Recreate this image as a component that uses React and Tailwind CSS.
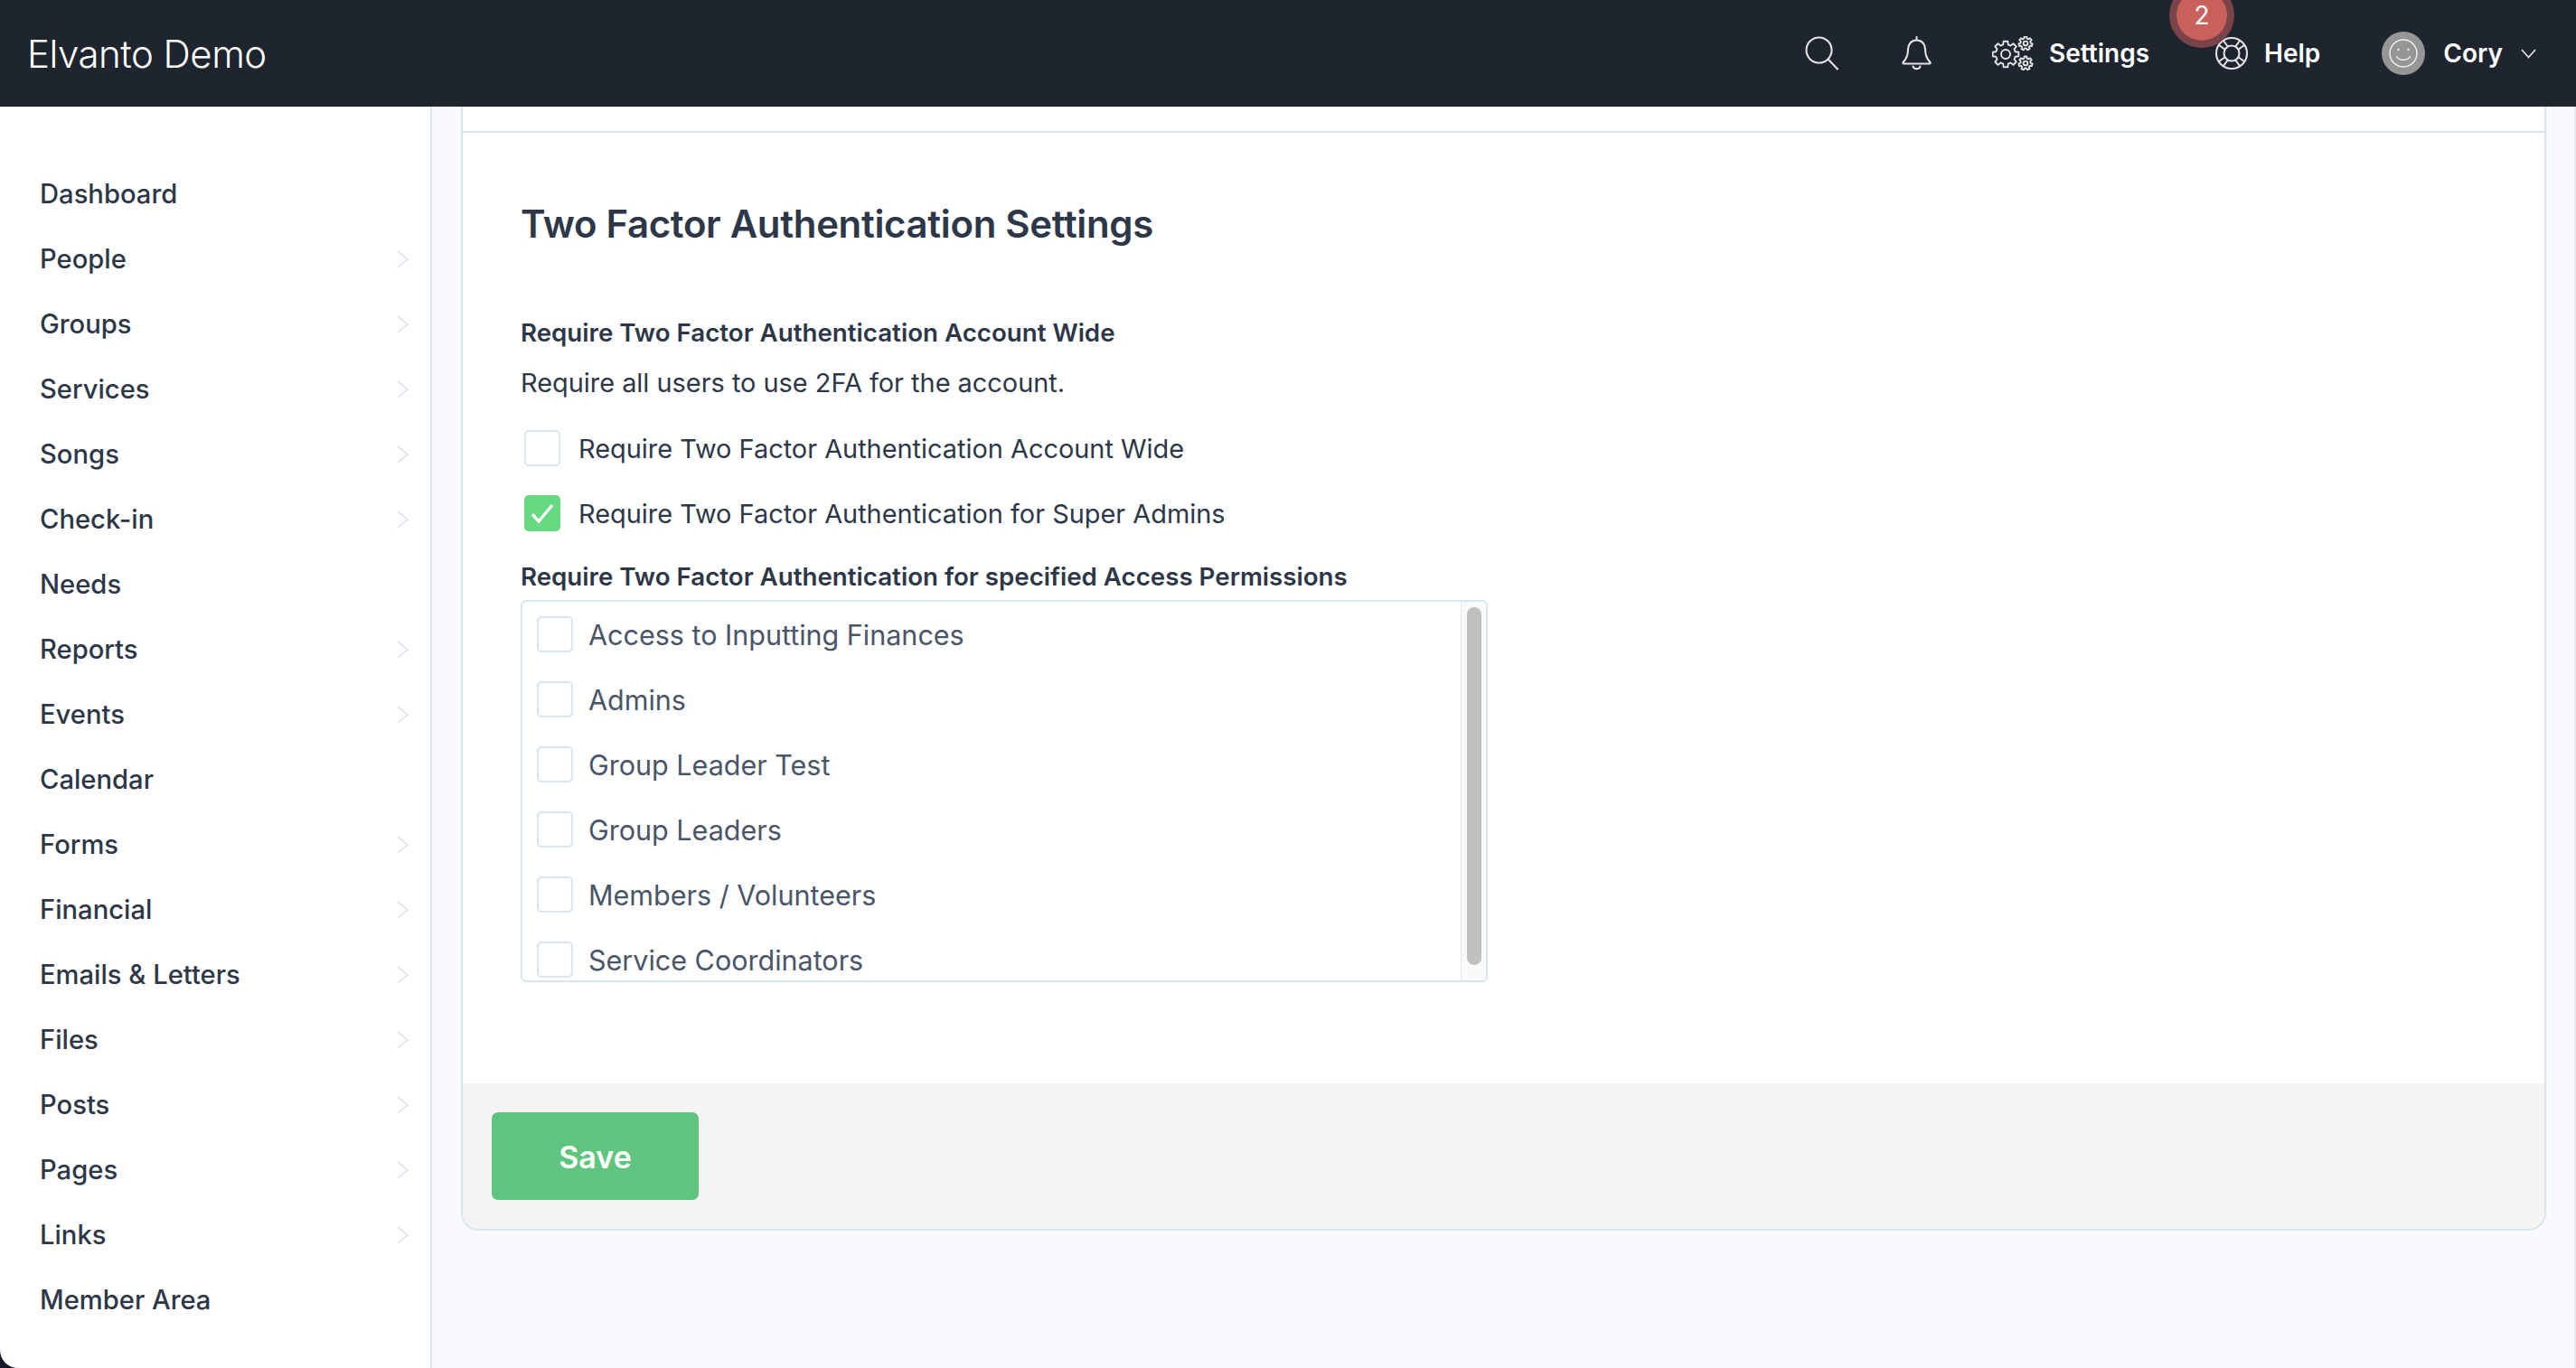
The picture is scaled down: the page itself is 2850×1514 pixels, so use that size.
import React from "react";

const items = [
  ["Dashboard", false], ["People", true], ["Groups", true], ["Services", true], ["Songs", true], ["Check-in", true],
  ["Needs", false], ["Reports", true], ["Events", true], ["Calendar", false], ["Forms", true], ["Financial", true],
  ["Emails & Letters", true], ["Files", true], ["Posts", true], ["Pages", true], ["Links", true], ["Member Area", false],
];
const perms = ["Access to Inputting Finances", "Admins", "Group Leader Test", "Group Leaders", "Members / Volunteers", "Service Coordinators"];

function gearPath(cx, cy, ro, ri, n) {
  const pts = [];
  const step = (Math.PI * 2) / n;
  for (let i = 0; i < n; i++) {
    const a = i * step - Math.PI / 2;
    const w = step * 0.2;
    const w2 = step * 0.3;
    const p = (r, t) => `${(cx + r * Math.cos(t)).toFixed(2)} ${(cy + r * Math.sin(t)).toFixed(2)}`;
    pts.push(p(ri, a - w2 - 0.02), p(ro, a - w), p(ro, a + w), p(ri, a + w2 + 0.02));
  }
  return "M" + pts.join("L") + "Z";
}

function Gears() {
  return (
    <svg width="46" height="38" viewBox="0 0 46 38" fill="none" stroke="#e2e2e2" strokeWidth="1.9" strokeLinejoin="round">
      <path d={gearPath(15, 20, 14.5, 11, 8)} />
      <circle cx="15" cy="20" r="5" />
      <path d={gearPath(37, 8, 7.6, 5.6, 7)} />
      <circle cx="37" cy="8" r="2.4" />
      <path d={gearPath(37, 30, 7.6, 5.6, 7)} />
      <circle cx="37" cy="30" r="2.4" />
    </svg>
  );
}

function Check({ checked }) {
  if (checked) {
    return (
      <span className="flex h-[40px] w-[40px] shrink-0 items-center justify-center rounded-[5px] bg-[#68d983]">
        <svg width="30" height="26" viewBox="0 0 30 26" fill="none" stroke="#ffffff" strokeWidth="3.2">
          <polyline points="4,14 11,22 26,4" />
        </svg>
      </span>
    );
  }
  return <span className="block h-[40px] w-[40px] shrink-0 rounded-[5px] border-2 border-[#dae4ee] bg-white" />;
}

export default function App() {
  return (
    <div className="relative flex h-[1514px] w-[2850px] flex-col overflow-hidden bg-[#f9fafe] font-['Inter',sans-serif] text-[#2d3748]">
      <header className="flex h-[118px] shrink-0 items-center bg-[#1e252f] text-white">
        <div className="ml-[30px] text-[42px] font-light tracking-[-0.5px]">Elvanto Demo</div>
        <div className="ml-auto flex items-center">
          <svg width="38" height="38" viewBox="0 0 38 38" fill="none" stroke="#e2e2e2" strokeWidth="2.1" strokeLinecap="round">
            <circle cx="15.5" cy="15.5" r="14" />
            <line x1="25.5" y1="25.5" x2="36" y2="36.5" />
          </svg>
          <svg className="ml-[69px]" width="33" height="38" viewBox="0 0 33 38" fill="none" stroke="#e2e2e2" strokeWidth="2.1" strokeLinecap="round" strokeLinejoin="round">
            <path d="M16.5 1v3.5M16.5 4.5c-6 0-9.5 4.5-9.5 10 0 7-2.5 11.5-5.5 14.5a1 1 0 0 0 .6 1.5h28.800a1 1 0 0 0 .6-1.500c-3-3-5.500-7.500-5.500-14.500 0-5.500-3.500-10-9.500-10Z" />
            <path d="M12.500 33.500c1 3.500 7 3.500 8 0" />
          </svg>
          <span className="ml-[67px]"><Gears /></span>
          <span className="ml-[17px] text-[28px] font-semibold leading-none">Settings</span>
          <svg className="ml-[72px]" width="38" height="38" viewBox="0 0 38 38" fill="none" stroke="#e2e2e2" strokeWidth="2.1">
            <circle cx="19" cy="19" r="17" />
            <circle cx="19" cy="19" r="8.500" />
            <path d="M5 10l7 5M10 5l5 7M33 10l-7 5M28 5l-5 7M5 28l7-5M10 33l5-7M33 28l-7-5M28 33l-5-7" />
          </svg>
          <span className="ml-[17px] text-[28px] font-semibold leading-none">Help</span>
          <span className="ml-[68px] flex h-[48px] w-[48px] items-center justify-center rounded-full bg-[#969696]">
            <svg width="34" height="34" viewBox="0 0 34 34" fill="none" stroke="#f2f2f2" strokeWidth="1.4" strokeLinecap="round">
              <circle cx="17" cy="17" r="15" />
              <path d="M9.500 20.500c2.500 5 12.500 5 15 0" />
              <circle cx="11.500" cy="13" r="1.200" fill="#f2f2f2" stroke="none" />
              <circle cx="22.500" cy="13" r="1.200" fill="#f2f2f2" stroke="none" />
            </svg>
          </span>
          <span className="ml-[20px] text-[28px] font-semibold leading-none">Cory</span>
          <svg className="ml-[20px] mr-[44px]" width="17" height="11" viewBox="0 0 17 11" fill="none" stroke="#e2e2e2" strokeWidth="1.700">
            <polyline points="1,1 8.500,9.500 16,1" />
          </svg>
        </div>
      </header>

      <div className="absolute left-[2400px] top-[-19px] flex h-[72px] w-[72px] items-center justify-center rounded-full bg-[#7a4347]">
        <span className="flex h-[56px] w-[56px] items-center justify-center rounded-full bg-[#c8605c] text-[28px] text-white">2</span>
      </div>

      <div className="flex min-h-0 flex-1">
        <aside className="w-[478px] shrink-0 border-r-2 border-[#dde6f0] bg-white pt-[61px]">
          {items.map(([label, arrow]) => (
            <div key={label} className="flex h-[72px] items-center justify-between pl-[44px] pr-[24px] text-[29.200px] font-medium text-[#2d3748]">
              <span>{label}</span>
              {arrow && (
                <svg width="13" height="20" viewBox="0 0 13 20" fill="none" stroke="#d5e1ec" strokeWidth="1.600">
                  <polyline points="1,1 12,10 1,19" />
                </svg>
              )}
            </div>
          ))}
        </aside>

        <main className="min-w-0 flex-1 pl-[32px] pr-[33px]">
          <div className="overflow-hidden rounded-b-[20px] border-x-2 border-b-2 border-[#dae4ee] bg-white">
            <div className="h-[29px] border-b-2 border-[#dae4ee]" />
            <div className="h-[1052px] pl-[64px]">
              <h2 className="flex h-[199px] items-center pt-[3px] text-[41.900px] font-semibold tracking-[-0.3px]">Two Factor Authentication Settings</h2>
              <div className="mt-[2px] flex h-[40px] items-center pt-px text-[27.700px] font-semibold">Require Two Factor Authentication Account Wide</div>
              <div className="mt-[16px] flex h-[40px] items-center text-[28.900px]">Require all users to use 2FA for the account.</div>
              <div className="mt-[16px] flex h-[72px] items-center pl-[4px] text-[28.900px]">
                <Check />
                <span className="ml-[20px] pt-px">Require Two Factor Authentication Account Wide</span>
              </div>
              <div className="flex h-[72px] items-center pl-[4px] text-[28.900px]">
                <Check checked />
                <span className="ml-[20px] pt-px">Require Two Factor Authentication for Super Admins</span>
              </div>
              <div className="mt-[14px] flex h-[40px] items-center pt-px text-[27.700px] font-semibold">Require Two Factor Authentication for specified Access Permissions</div>
              <div className="mt-[6px] flex h-[423px] w-[1070px] overflow-hidden rounded-[6px] border-2 border-[#dae4ee]">
                <div className="min-w-0 flex-1 pl-[16px]">
                  {perms.map((p) => (
                    <div key={p} className="flex h-[72px] shrink-0 items-center text-[30.500px] text-[#4a5568]">
                      <Check />
                      <span className="ml-[17px] pt-[2px]">{p}</span>
                    </div>
                  ))}
                </div>
                <div className="w-[28px] shrink-0 border-l border-[#e8e8e8] bg-[#fafafa] pl-[6px] pt-[6px]">
                  <div className="h-[396px] w-[16px] rounded-full bg-[#c0c0c0]" />
                </div>
              </div>
            </div>
            <div className="bg-[#f4f4f4] px-[32px] py-[32px]">
              <button className="flex h-[97px] w-[229px] items-center justify-center rounded-[7px] bg-[#5fc57e] pt-px text-[34px] font-semibold text-white">Save</button>
            </div>
          </div>
        </main>
      </div>

      <div className="absolute right-0 top-[118px] h-[1396px] w-[2px] bg-[#e8e8e8]" />
      <div className="absolute bottom-0 left-0 h-[20px] w-[20px] bg-[#111a26]">
        <div className="h-full w-full rounded-bl-[20px] bg-white" />
      </div>
    </div>
  );
}
